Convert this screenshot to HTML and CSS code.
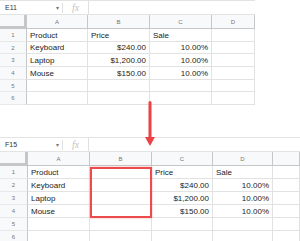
FILE: index.html
```html
<!DOCTYPE html>
<html lang="en">
<head>
  <meta charset="UTF-8" />
  <title>Insert column</title>
  <link rel="stylesheet" href="styles.css">
</head>
<body>
  <div class="page">
    <div class="sheet sheet-top">
      <div class="fbar">
        <span class="namebox">E11</span>
        <span class="drop">&#9662;</span>
        <span class="sep short"></span>
        <span class="fx">fx</span>
        <span class="sep"></span>
      </div>
      <div class="grid grid-top">
        <div class="corner"></div>
        <div class="colhdr">A</div>
        <div class="colhdr">B</div>
        <div class="colhdr">C</div>
        <div class="colhdr">D</div>

        <div class="rowhdr">1</div>
        <div class="cell">Product</div>
        <div class="cell">Price</div>
        <div class="cell">Sale</div>
        <div class="cell"></div>

        <div class="rowhdr">2</div>
        <div class="cell">Keyboard</div>
        <div class="cell num">$240.00</div>
        <div class="cell num">10.00%</div>
        <div class="cell"></div>

        <div class="rowhdr">3</div>
        <div class="cell">Laptop</div>
        <div class="cell num">$1,200.00</div>
        <div class="cell num">10.00%</div>
        <div class="cell"></div>

        <div class="rowhdr">4</div>
        <div class="cell">Mouse</div>
        <div class="cell num">$150.00</div>
        <div class="cell num">10.00%</div>
        <div class="cell"></div>

        <div class="rowhdr">5</div>
        <div class="cell"></div>
        <div class="cell"></div>
        <div class="cell"></div>
        <div class="cell"></div>

        <div class="rowhdr">6</div>
        <div class="cell"></div>
        <div class="cell"></div>
        <div class="cell"></div>
        <div class="cell"></div>
      </div>
    </div>

    <div class="gap"></div>

    <div class="sheet sheet-bottom">
      <div class="fbar">
        <span class="namebox">F15</span>
        <span class="drop">&#9662;</span>
        <span class="sep short"></span>
        <span class="fx">fx</span>
        <span class="sep"></span>
      </div>
      <div class="grid grid-bottom">
        <div class="corner"></div>
        <div class="colhdr">A</div>
        <div class="colhdr">B</div>
        <div class="colhdr">C</div>
        <div class="colhdr">D</div>
        <div class="colhdr"></div>

        <div class="rowhdr">1</div>
        <div class="cell">Product</div>
        <div class="cell"></div>
        <div class="cell">Price</div>
        <div class="cell">Sale</div>
        <div class="cell"></div>

        <div class="rowhdr">2</div>
        <div class="cell">Keyboard</div>
        <div class="cell"></div>
        <div class="cell num">$240.00</div>
        <div class="cell num">10.00%</div>
        <div class="cell"></div>

        <div class="rowhdr">3</div>
        <div class="cell">Laptop</div>
        <div class="cell"></div>
        <div class="cell num">$1,200.00</div>
        <div class="cell num">10.00%</div>
        <div class="cell"></div>

        <div class="rowhdr">4</div>
        <div class="cell">Mouse</div>
        <div class="cell"></div>
        <div class="cell num">$150.00</div>
        <div class="cell num">10.00%</div>
        <div class="cell"></div>

        <div class="rowhdr">5</div>
        <div class="cell"></div>
        <div class="cell"></div>
        <div class="cell"></div>
        <div class="cell"></div>
        <div class="cell"></div>

        <div class="rowhdr">6</div>
        <div class="cell"></div>
        <div class="cell"></div>
        <div class="cell"></div>
        <div class="cell"></div>
        <div class="cell"></div>
      </div>
      <div class="highlight"></div>
    </div>

    <svg class="arrow" width="12" height="46" viewBox="0 0 12 46">
      <rect x="4.5" y="0" width="3" height="38" rx="1.5" fill="#ea4346"/>
      <path d="M1 36 L11 36 L6 45 Z" fill="#ea4346"/>
    </svg>
  </div>
</body>
</html>
```

FILE: styles.css
```css
body {
  margin: 0;
  background: #fff;
  font-family: "Liberation Sans", Arial, sans-serif;
  color: #222;
}
.page {
  position: relative;
  width: 300px;
  height: 241px;
  overflow: hidden;
}
.sheet {
  position: relative;
}
.sheet-top {
  width: 255px;
  height: 105px;
  overflow: hidden;
}
.sheet-bottom {
  width: 300px;
}
.gap {
  height: 32px;
}
.fbar {
  box-sizing: border-box;
  height: 15px;
  display: flex;
  align-items: center;
  border-top: 1px solid #e3e3e3;
  border-bottom: 1px solid #e3e3e3;
}
.namebox {
  width: 51px;
  padding-left: 5px;
  font-size: 7px;
  color: #333;
}
.drop {
  width: 6px;
  font-size: 6px;
  color: #777;
}
.sep {
  width: 1px;
  height: 13px;
  background: #e0e0e0;
}
.sep.short {
  height: 10px;
}
.fx {
  width: 25px;
  text-align: center;
  font-family: "Liberation Serif", serif;
  font-style: italic;
  font-size: 10px;
  color: #c4c4c4;
}
.grid {
  display: grid;
}
.grid-top {
  grid-template-columns: 27px 61px 62px 62px 43px;
  grid-template-rows: 14px 13px 12px 13px 13px 12px 13px;
}
.grid-bottom {
  grid-template-columns: 28px 62px 62px 61px 60px 27px;
  grid-template-rows: 14px 13px 13px 13px 13px 13px 13px;
}
.grid > div {
  box-sizing: border-box;
  border-right: 1px solid #e2e2e2;
  border-bottom: 1px solid #e2e2e2;
  display: flex;
  align-items: center;
  overflow: hidden;
  white-space: nowrap;
}
.grid > .corner {
  background: #f8f9fa;
  border-right: 3px solid #c4c7c5;
  border-bottom: 3px solid #c4c7c5;
}
.grid > .colhdr {
  background: #f8f9fa;
  border-right-color: #c7c7c7;
  border-bottom-color: #c7c7c7;
  justify-content: center;
  font-size: 6px;
  color: #777;
}
.grid > .rowhdr {
  background: #f8f9fa;
  border-right-color: #c7c7c7;
  border-bottom-color: #e8e8e8;
  justify-content: center;
  font-size: 6px;
  color: #777;
}
.cell {
  padding: 0 3px;
  font-size: 8px;
  color: #222;
}
.cell.num {
  justify-content: flex-end;
}
.highlight {
  position: absolute;
  left: 90px;
  top: 30px;
  width: 62px;
  height: 51px;
  box-sizing: border-box;
  border: 2px solid #ec4b4e;
  box-shadow: 0 0 2px rgba(236, 75, 78, 0.45);
}
.arrow {
  position: absolute;
  left: 144px;
  top: 101px;
}
```
